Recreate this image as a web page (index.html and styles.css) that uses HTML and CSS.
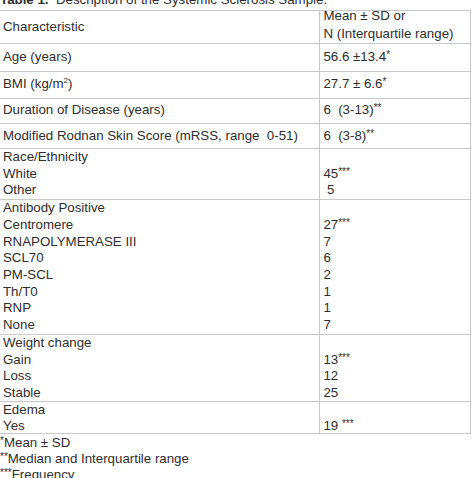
FILE: index.html
```html
<!DOCTYPE html>
<html>
<head>
<meta charset="utf-8">
<link rel="stylesheet" href="styles.css">
</head>
<body>
<div class="title"><b>Table 1.</b>&nbsp; Description of the Systemic Sclerosis Sample.</div>
<table class="tbl">
  <tr class="r-head">
    <td class="c1 mid">Characteristic</td>
    <td class="c2"><div class="head2"><div>Mean ± SD or</div><div>N (Interquartile range)</div></div></td>
  </tr>
  <tr class="r-age">
    <td class="c1">Age (years)</td>
    <td class="c2">56.6 ±13.4<sup>*</sup></td>
  </tr>
  <tr class="r-bmi">
    <td class="c1">BMI (kg/m<sup class="sq">2</sup>)</td>
    <td class="c2">27.7 ± 6.6<sup>*</sup></td>
  </tr>
  <tr class="r-dur">
    <td class="c1">Duration of Disease (years)</td>
    <td class="c2">6&nbsp; (3-13)<sup>**</sup></td>
  </tr>
  <tr class="r-mrss">
    <td class="c1">Modified Rodnan Skin Score (mRSS, range&nbsp; 0-51)</td>
    <td class="c2">6&nbsp; (3-8)<sup>**</sup></td>
  </tr>
  <tr class="grp g-race">
    <td class="c1"><div>Race/Ethnicity</div><div>White</div><div>Other</div></td>
    <td class="c2"><div>&nbsp;</div><div>45<sup>***</sup></div><div>&nbsp;5</div></td>
  </tr>
  <tr class="grp g-ab">
    <td class="c1"><div>Antibody Positive</div><div>Centromere</div><div>RNAPOLYMERASE III</div><div>SCL70</div><div>PM-SCL</div><div>Th/T0</div><div>RNP</div><div>None</div></td>
    <td class="c2"><div>&nbsp;</div><div>27<sup>***</sup></div><div>7</div><div>6</div><div>2</div><div>1</div><div>1</div><div>7</div></td>
  </tr>
  <tr class="grp g-wt">
    <td class="c1"><div>Weight change</div><div>Gain</div><div>Loss</div><div>Stable</div></td>
    <td class="c2"><div>&nbsp;</div><div>13<sup>***</sup></div><div>12</div><div>25</div></td>
  </tr>
  <tr class="grp g-ed">
    <td class="c1"><div>Edema</div><div>Yes</div></td>
    <td class="c2"><div>&nbsp;</div><div>19 <sup>***</sup></div></td>
  </tr>
</table>
<div class="notes">
  <div><sup>*</sup>Mean ± SD</div>
  <div><sup>**</sup>Median and Interquartile range</div>
  <div><sup>***</sup>Frequency</div>
</div>
</body>
</html>
```

FILE: styles.css
```css
html, body {
  margin: 0;
  padding: 0;
  background: #ffffff;
}
body {
  font-family: "Liberation Sans", Arial, sans-serif;
  font-size: 13.3px;
  color: #2e2e2e;
  overflow: hidden;
  width: 474px;
  height: 478px;
}
.title {
  margin-top: -9px;
  height: 19px;
  line-height: 17px;
  white-space: nowrap;
}
.tbl {
  border-collapse: collapse;
  margin-left: -1px;
  width: 472px;
}
.tbl td {
  border: 1px solid #c9c9c9;
  padding: 0 3px;
  vertical-align: top;
  line-height: 16.7px;
  white-space: nowrap;
}
.tbl td.c1 { width: 314px; }
.tbl td.c2 { width: 144px; }
.tbl td.mid { vertical-align: middle; }
.r-head td { height: 31px; }
.head2 {
  margin-top: -4px;
  line-height: 18px;
}
.r-age td { height: 27px; vertical-align: middle; }
.r-bmi td { vertical-align: middle; padding-bottom: 2px; height: 24px; }
.r-dur td { vertical-align: middle; padding-bottom: 2px; height: 22px; }
.r-mrss td { vertical-align: middle; padding-top: 1px; height: 23px; }
.grp td { padding-top: 0; padding-bottom: 0; }
.g-race td { height: 50px; }
.g-ab td { height: 134px; }
.g-wt td { height: 66px; line-height: 16.5px; }
.g-ed td { height: 31px; line-height: 15.5px; }
sup {
  font-size: 10px;
  line-height: 0;
  vertical-align: 3px;
}
sup.sq {
  font-size: 8px;
  vertical-align: 5px;
}
.notes {
  line-height: 16px;
  padding-top: 1px;
}
```
